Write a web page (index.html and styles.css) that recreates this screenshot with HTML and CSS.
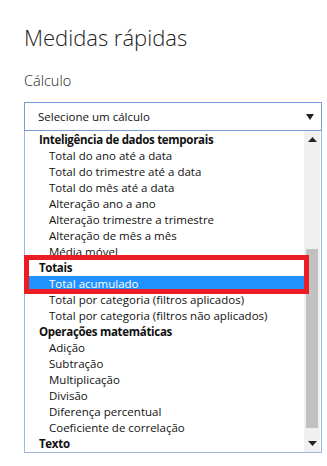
FILE: index.html
```html
<!DOCTYPE html>
<html lang="pt">
<head>
<meta charset="utf-8">
<link rel="stylesheet" href="styles.css">
</head>
<body>
<div class="panel">
  <h1 class="title">Medidas rápidas</h1>
  <div class="label">Cálculo</div>
  <div class="select">
    <span class="select-text">Selecione um cálculo</span>
    <svg class="select-arrow" width="8" height="6" viewBox="0 0 8 6"><path d="M0 0H8L4 6Z" fill="#222"/></svg>
  </div>
  <div class="list">
    <div class="options">
      <div class="row group">Inteligência de dados temporais</div>
      <div class="row item">Total do ano até a data</div>
      <div class="row item">Total do trimestre até a data</div>
      <div class="row item">Total do mês até a data</div>
      <div class="row item">Alteração ano a ano</div>
      <div class="row item">Alteração trimestre a trimestre</div>
      <div class="row item">Alteração de mês a mês</div>
      <div class="row item">Média móvel</div>
      <div class="row group">Totais</div>
      <div class="row item selected">Total acumulado</div>
      <div class="row item">Total por categoria (filtros aplicados)</div>
      <div class="row item">Total por categoria (filtros não aplicados)</div>
      <div class="row group">Operações matemáticas</div>
      <div class="row item">Adição</div>
      <div class="row item">Subtração</div>
      <div class="row item">Multiplicação</div>
      <div class="row item">Divisão</div>
      <div class="row item">Diferença percentual</div>
      <div class="row item">Coeficiente de correlação</div>
      <div class="row group">Texto</div>
    </div>
    <div class="scrollbar">
      <div class="sb-btn"><svg width="9" height="5" viewBox="0 0 9 5"><path d="M0 5H9L4.5 0Z" fill="#222"/></svg></div>
      <div class="sb-track"><div class="sb-thumb"></div></div>
      <div class="sb-btn"><svg width="9" height="5" viewBox="0 0 9 5"><path d="M0 0H9L4.5 5Z" fill="#222"/></svg></div>
    </div>
    <div class="highlight-box"></div>
  </div>
</div>
</body>
</html>
```
FILE: styles.css
```css
html, body {
  margin: 0;
  padding: 0;
  background: #ffffff;
}
body {
  font-family: "Open Sans", "Liberation Sans", sans-serif;
  color: #1a1a1a;
}
.panel {
  padding: 22px 0 0 24px;
  width: 298px;
}
.title {
  margin: 0;
  font-weight: 300;
  font-size: 22px;
  line-height: 30px;
  color: #222;
}
.label {
  margin-top: 19px;
  font-size: 14.5px;
  font-weight: 300;
  line-height: 20px;
  color: #222;
}
.select {
  margin-top: 11px;
  height: 27px;
  border: 1px solid #7a9bd3;
  display: flex;
  align-items: center;
  justify-content: space-between;
  padding: 0 7px 0 13px;
}
.select-text {
  font-size: 11.5px;
  color: #111;
}
.list {
  position: relative;
  display: flex;
  border: 1px solid #9fb6dd;
  border-top: none;
  height: 321px;
}
.options {
  flex: 1;
  padding-top: 1px;
}
.row {
  height: 16px;
  line-height: 16px;
  font-size: 11.5px;
  white-space: nowrap;
  color: #111;
}
.group {
  font-weight: 700;
  padding-left: 14px;
  letter-spacing: -0.3px;
}
.item {
  padding-left: 24px;
}
.selected {
  background: #2192ff;
  color: #fff;
}
.scrollbar {
  width: 16px;
  margin-right: 1px;
  background: #f0f0f0;
  display: flex;
  flex-direction: column;
}
.sb-btn {
  height: 17px;
  display: flex;
  align-items: center;
  justify-content: center;
}
.sb-track {
  flex: 1;
  position: relative;
  padding: 101px 2px 7px 2px;
  display: flex;
}
.sb-thumb {
  flex: 1;
  background: #c1c1c1;
}
.highlight-box {
  position: absolute;
  left: -1px;
  top: 124px;
  width: 275px;
  height: 29px;
  border: 5px solid #ec1c24;
}
```
